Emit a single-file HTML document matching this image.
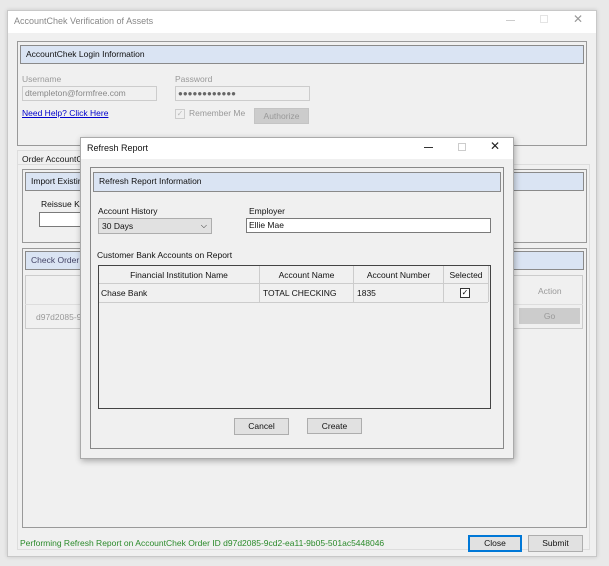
<!DOCTYPE html>
<html><head><meta charset="utf-8"><style>
*{box-sizing:border-box;margin:0;padding:0}
body{width:609px;height:566px;background:#e9e9e9;position:relative;overflow:hidden;font-family:"Liberation Sans",sans-serif;font-size:8.5px;color:#111}
.a{position:absolute;white-space:nowrap}
.hdr{position:absolute;background:#dae4f3;border:1px solid #8a8a8a;padding-left:5px;line-height:17px;white-space:nowrap;overflow:hidden}
.grp{position:absolute;border:1px solid #a8a8a8}
.inp{position:absolute;background:#fff;border:1px solid #7a7a7a;padding-left:2px;line-height:13px;white-space:nowrap}
.btn{position:absolute;background:#e1e1e1;border:1px solid #adadad;text-align:center;line-height:14px}
.g{color:#999}
</style></head><body>
<div class="a" style="left:7px;top:10px;width:590px;height:547px;background:#f0f0f0;border:1px solid #c8c8c8;box-shadow:0 0 4px rgba(0,0,0,.15)"></div>
<div class="a" style="left:8px;top:11px;width:588px;height:22px;background:#fff"></div>
<div class="a g" style="left:14px;top:16px;font-size:9px;color:#888">AccountChek Verification of Assets</div>
<div class="a" style="left:506px;top:20px;width:9px;height:1px;background:#ccc"></div>
<div class="a" style="left:540px;top:15px;width:8px;height:8px;border:1px solid #e4e4e4"></div>
<div class="a" style="left:573px;top:12px;color:#999;font-size:12px">✕</div>

<div class="grp" style="left:17px;top:41px;width:570px;height:105px;border-color:#999"></div>
<div class="hdr" style="left:20px;top:45px;width:564px;height:19px;">AccountChek Login Information</div>
<div class="a g" style="left:22px;top:74px">Username</div>
<div class="inp" style="left:22px;top:86px;width:135px;height:15px;background:#f0f0f0;border-color:#ccc;color:#888">dtempleton@formfree.com</div>
<div class="a g" style="left:175px;top:74px">Password</div>
<div class="inp" style="left:175px;top:86px;width:135px;height:15px;background:#f0f0f0;border-color:#ccc;color:#666;font-size:8px">●●●●●●●●●●●●</div>
<div class="a" style="left:22px;top:108px;color:#00c;text-decoration:underline">Need Help? Click Here</div>
<div class="a" style="left:175px;top:109px;width:10px;height:10px;border:1px solid #ccc;color:#bbb;font-size:8px;line-height:8px;text-align:center">✓</div>
<div class="a g" style="left:189px;top:108px">Remember Me</div>
<div class="btn" style="left:254px;top:108px;width:55px;height:16px;background:#ccc;border-color:#c4c4c4;color:#999">Authorize</div>

<div class="a" style="left:17px;top:150px;width:66px;height:15px;border:1px solid #ddd;border-bottom:none;padding:3px 0 0 4px">Order AccountC</div>
<div class="grp" style="left:17px;top:164px;width:573px;height:386px;border-color:#ddd"></div>
<div class="grp" style="left:22px;top:169px;width:565px;height:74px;border-color:#999"></div>
<div class="hdr" style="left:25px;top:172px;width:559px;height:19px">Import Existing</div>
<div class="a" style="left:41px;top:199px">Reissue Ke</div>
<div class="inp" style="left:39px;top:212px;width:60px;height:15px"></div>
<div class="grp" style="left:22px;top:248px;width:565px;height:280px;border-color:#999"></div>
<div class="hdr" style="left:25px;top:251px;width:559px;height:19px;color:#446">Check Order S</div>
<div class="grp" style="left:25px;top:275px;width:558px;height:54px;border-color:#ccc"></div>
<div class="a" style="left:25px;top:304px;width:558px;height:1px;background:#ddd"></div>
<div class="a g" style="left:538px;top:286px">Action</div>
<div class="a g" style="left:36px;top:312px">d97d2085-9</div>
<div class="btn" style="left:519px;top:308px;width:61px;height:16px;background:#ccc;border-color:#ccc;color:#999">Go</div>

<div class="a" style="left:20px;top:538px;color:#2a8a2a">Performing Refresh Report on AccountChek Order ID d97d2085-9cd2-ea11-9b05-501ac5448046</div>
<div class="btn" style="left:468px;top:535px;width:54px;height:17px;border:2px solid #0078d7;line-height:13px">Close</div>
<div class="btn" style="left:528px;top:535px;width:55px;height:17px">Submit</div>

<div class="a" style="left:80px;top:137px;width:434px;height:322px;background:#f0f0f0;border:1px solid #aaa;box-shadow:1px 2px 6px rgba(0,0,0,.3)"></div>
<div class="a" style="left:81px;top:138px;width:432px;height:21px;background:#fff"></div>
<div class="a" style="left:87px;top:143px;font-size:9px">Refresh Report</div>
<div class="a" style="left:424px;top:147px;width:9px;height:1px;background:#333"></div>
<div class="a" style="left:458px;top:143px;width:8px;height:8px;border:1px solid #ccc"></div>
<div class="a" style="left:490px;top:139px;font-size:12px;color:#222">✕</div>
<div class="grp" style="left:90px;top:167px;width:414px;height:282px;border-color:#888"></div>
<div class="hdr" style="left:93px;top:172px;width:408px;height:20px">Refresh Report Information</div>
<div class="a" style="left:98px;top:206px">Account History</div>
<div class="a" style="left:98px;top:218px;width:114px;height:16px;background:#e1e1e1;border:1px solid #adadad;padding-left:3px;line-height:14px">30 Days<span style="position:absolute;right:4px;top:0;font-size:8px">⌵</span></div>
<div class="a" style="left:249px;top:206px">Employer</div>
<div class="inp" style="left:246px;top:218px;width:245px;height:15px">Ellie Mae</div>
<div class="a" style="left:97px;top:250px">Customer Bank Accounts on Report</div>
<div class="a" style="left:98px;top:265px;width:393px;height:144px;border:1px solid #444;background:#f0f0f0"></div>
<div class="a" style="left:99px;top:283px;width:389px;height:1px;background:#ccc"></div>
<div class="a" style="left:99px;top:302px;width:389px;height:1px;background:#ccc"></div>
<div class="a" style="left:259px;top:266px;width:1px;height:36px;background:#ccc"></div>
<div class="a" style="left:353px;top:266px;width:1px;height:36px;background:#ccc"></div>
<div class="a" style="left:443px;top:266px;width:1px;height:36px;background:#ccc"></div>
<div class="a" style="left:488px;top:266px;width:1px;height:36px;background:#ccc"></div>
<div class="a" style="left:99px;top:270px;width:160px;text-align:center">Financial Institution Name</div>
<div class="a" style="left:260px;top:270px;width:93px;text-align:center">Account Name</div>
<div class="a" style="left:354px;top:270px;width:89px;text-align:center">Account Number</div>
<div class="a" style="left:444px;top:270px;width:44px;text-align:center">Selected</div>
<div class="a" style="left:101px;top:288px">Chase Bank</div>
<div class="a" style="left:263px;top:288px">TOTAL CHECKING</div>
<div class="a" style="left:357px;top:288px">1835</div>
<div class="a" style="left:460px;top:288px;width:10px;height:10px;border:1px solid #333;background:#fff;font-size:8px;line-height:8px;text-align:center">✓</div>
<div class="btn" style="left:234px;top:418px;width:55px;height:17px">Cancel</div>
<div class="btn" style="left:307px;top:418px;width:55px;height:16px">Create</div>
</body></html>
